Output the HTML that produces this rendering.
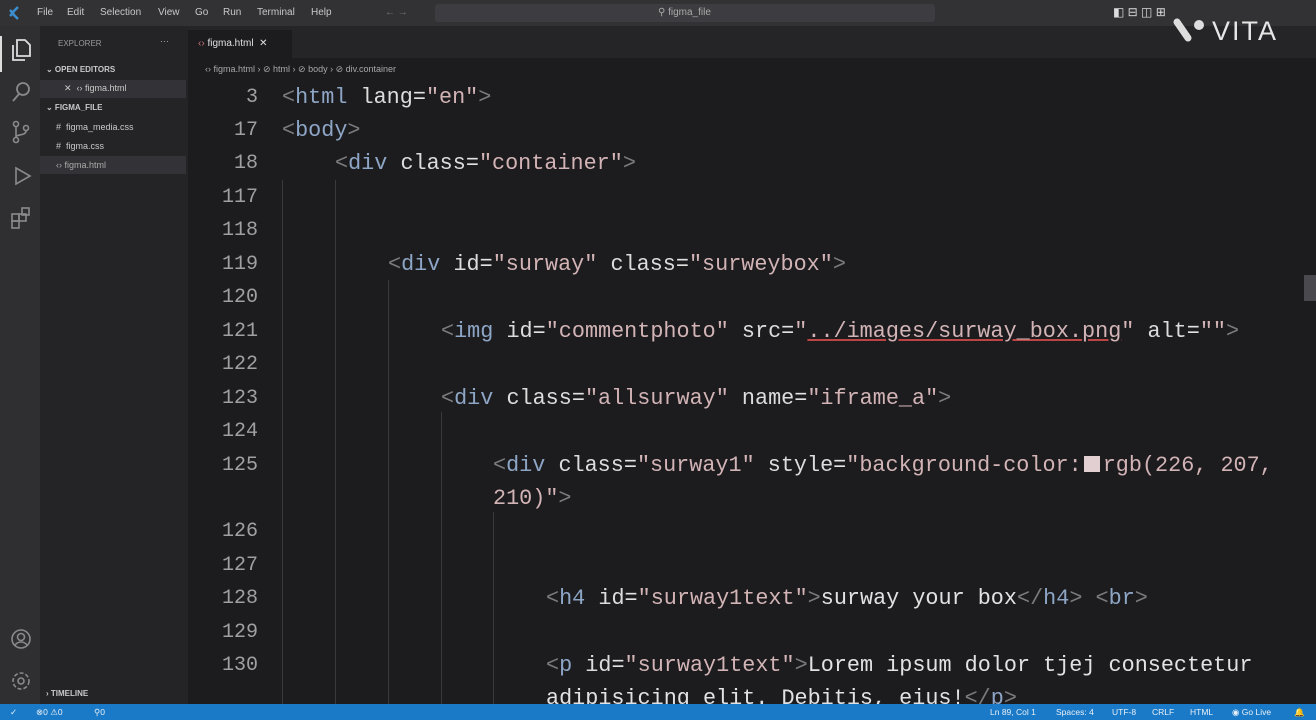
<!DOCTYPE html>
<html><head><meta charset="utf-8"><style>
*{margin:0;padding:0;box-sizing:border-box}
body{width:1316px;height:720px;overflow:hidden;background:#1c1b1e;font-family:"Liberation Sans",sans-serif;position:relative;color:#ccc}
.abs{position:absolute}
#title{left:0;top:0;width:1316px;height:26px;background:#323134}
#title span{position:absolute;top:7px;font-size:10px;color:#c8c8c8}
#act{left:0;top:26px;width:40px;height:678px;background:#2f2e31}
#side{left:40px;top:26px;width:148px;height:678px;background:#242326}
.s{position:absolute;font-size:9px;color:#c9c9c9;white-space:nowrap}
#tabs{left:188px;top:26px;width:1128px;height:32px;background:#252427}
#tab{left:188px;top:30px;width:104px;height:28px;background:#1c1b1e}
#status{left:0;top:704px;width:1316px;height:16px;background:#1a7ac7}
#status span{position:absolute;top:3px;font-size:8.5px;color:#e8f0f8}
.code{position:absolute;font-family:"Liberation Mono",monospace;font-size:21.8px;white-space:pre;line-height:26px;margin-top:2px}
.ln{position:absolute;width:60px;left:198px;text-align:right;font-family:"Liberation Mono",monospace;font-size:20px;color:#a0a0a0;margin-top:2px}
.t{color:#8ea6c6}.b{color:#7b7b7e}.a{color:#dcdcdc}.q{color:#d2b4b6}.x{color:#e2e2e2}
.guide{position:absolute;width:1px;background:#3a393c}
</style></head><body>
<div class="abs" id="title">
<svg class="abs" style="left:8px;top:6px" width="14" height="14"><path d="M10 1 L4 7 L10 13 M2 4 L5 7 L2 10" stroke="#3b8ed0" stroke-width="2.5" fill="none"/></svg>
<span style="left:37px">File</span><span style="left:67px">Edit</span><span style="left:100px">Selection</span><span style="left:158px">View</span><span style="left:195px">Go</span><span style="left:223px">Run</span><span style="left:257px">Terminal</span><span style="left:311px">Help</span>
<span style="left:385px;color:#777">←  →</span>
<div class="abs" style="left:435px;top:4px;width:500px;height:18px;background:#3d3c40;border-radius:3px"></div>
<span style="left:658px;color:#aaa">⚲ figma_file</span>
<span style="left:1113px;color:#ddd;font-size:12px;top:5px">◧ ⊟ ◫ ⊞</span>
</div>
<div class="abs" id="act">
<div class="abs" style="left:0;top:10px;width:2px;height:36px;background:#ddd"></div>
<svg class="abs" style="left:10px;top:12px" width="22" height="24" fill="none" stroke="#ddd" stroke-width="1.8"><path d="M7 2h8l5 5v11H7z M3 7v15h12"/></svg>
<svg class="abs" style="left:10px;top:54px" width="22" height="24" fill="none" stroke="#8a8a8a" stroke-width="1.8"><circle cx="13" cy="9" r="6"/><path d="M9 14l-6 7"/></svg>
<svg class="abs" style="left:10px;top:94px" width="22" height="24" fill="none" stroke="#8a8a8a" stroke-width="1.6"><circle cx="6" cy="4" r="2.5"/><circle cx="6" cy="20" r="2.5"/><circle cx="16" cy="8" r="2.5"/><path d="M6 7v10 M16 11c0 5-10 3-10 6"/></svg>
<svg class="abs" style="left:10px;top:138px" width="22" height="24" fill="none" stroke="#8a8a8a" stroke-width="1.6"><path d="M6 4l14 8-14 8z"/></svg>
<svg class="abs" style="left:10px;top:180px" width="22" height="24" fill="none" stroke="#8a8a8a" stroke-width="1.6"><rect x="2" y="8" width="7" height="7"/><rect x="9" y="8" width="7" height="7"/><rect x="2" y="15" width="7" height="7"/><rect x="12" y="2" width="7" height="7"/></svg>
<svg class="abs" style="left:10px;top:602px" width="22" height="22" fill="none" stroke="#8a8a8a" stroke-width="1.6"><circle cx="11" cy="11" r="9"/><circle cx="11" cy="9" r="3.5"/><path d="M5 17c3-4 9-4 12 0"/></svg>
<svg class="abs" style="left:10px;top:644px" width="22" height="22" fill="none" stroke="#8a8a8a" stroke-width="1.6"><circle cx="11" cy="11" r="3"/><circle cx="11" cy="11" r="8" stroke-dasharray="4 2"/></svg>
</div>
<div class="abs" id="side">
<div class="s" style="left:18px;top:13px;color:#999;font-size:8px">EXPLORER</div>
<div class="s" style="left:120px;top:10px;color:#aaa">···</div>
<div class="s" style="left:6px;top:39px;font-weight:bold;font-size:8px">⌄ OPEN EDITORS</div>
<div class="abs" style="left:0;top:54px;width:146px;height:18px;background:#333236"></div>
<div class="s" style="left:24px;top:57px">✕ &nbsp;‹› figma.html</div>
<div class="s" style="left:6px;top:77px;font-weight:bold;font-size:8px">⌄ FIGMA_FILE</div>
<div class="s" style="left:16px;top:96px"># &nbsp;figma_media.css</div>
<div class="s" style="left:16px;top:115px"># &nbsp;figma.css</div>
<div class="abs" style="left:0;top:130px;width:146px;height:18px;background:#333236"></div>
<div class="s" style="left:16px;top:134px;color:#aaa">‹› figma.html</div>
<div class="s" style="left:6px;top:663px;font-weight:bold;font-size:8px">› TIMELINE</div>
</div>
<div class="abs" id="tabs"></div>
<div class="abs" id="tab"><div class="s" style="left:10px;top:8px;font-size:10px;color:#e0e0e0"><span style="color:#c77">‹›</span> figma.html &nbsp;✕</div></div>
<div class="s" style="left:205px;top:64px;color:#a8a8a8">‹› figma.html › ⊘ html › ⊘ body › ⊘ div.container</div>
<svg class="abs" style="left:1172px;top:18px" width="34" height="26"><path d="M5 4 L16 20" stroke="#ddd" stroke-width="7" stroke-linecap="round"/><circle cx="27" cy="7" r="5" fill="#ddd"/></svg>
<div class="abs" style="left:1212px;top:16px;font-size:27px;color:#e6e6e6;letter-spacing:2px">VITA</div>

<div class="guide" style="left:282px;top:180px;height:524px"></div>
<div class="guide" style="left:335px;top:180px;height:524px"></div>
<div class="guide" style="left:388px;top:280px;height:424px"></div>
<div class="guide" style="left:441px;top:412px;height:292px"></div>
<div class="guide" style="left:493px;top:512px;height:192px"></div>
<div class="abs" style="left:1304px;top:275px;width:12px;height:26px;background:#4a494d"></div>

<div class="ln" style="top:84px">3</div><div class="code" style="left:282px;top:83px"><span class="b">&lt;</span><span class="t">html</span> <span class="a">lang</span><span class="x">=</span><span class="q">"en"</span><span class="b">&gt;</span></div>
<div class="ln" style="top:117px">17</div><div class="code" style="left:282px;top:116px"><span class="b">&lt;</span><span class="t">body</span><span class="b">&gt;</span></div>
<div class="ln" style="top:150px">18</div><div class="code" style="left:335px;top:149px"><span class="b">&lt;</span><span class="t">div</span> <span class="a">class</span><span class="x">=</span><span class="q">"container"</span><span class="b">&gt;</span></div>
<div class="ln" style="top:184px">117</div>
<div class="ln" style="top:217px">118</div>
<div class="ln" style="top:251px">119</div><div class="code" style="left:388px;top:250px"><span class="b">&lt;</span><span class="t">div</span> <span class="a">id</span><span class="x">=</span><span class="q">"surway"</span> <span class="a">class</span><span class="x">=</span><span class="q">"surweybox"</span><span class="b">&gt;</span></div>
<div class="ln" style="top:284px">120</div>
<div class="ln" style="top:318px">121</div><div class="code" style="left:441px;top:317px"><span class="b">&lt;</span><span class="t">img</span> <span class="a">id</span><span class="x">=</span><span class="q">"commentphoto"</span> <span class="a">src</span><span class="x">=</span><span class="q">"<u style="text-decoration-color:#b44">../images/surway_box.png</u>"</span> <span class="a">alt</span><span class="x">=</span><span class="q">""</span><span class="b">&gt;</span></div>
<div class="ln" style="top:351px">122</div>
<div class="ln" style="top:385px">123</div><div class="code" style="left:441px;top:384px"><span class="b">&lt;</span><span class="t">div</span> <span class="a">class</span><span class="x">=</span><span class="q">"allsurway"</span> <span class="a">name</span><span class="x">=</span><span class="q">"iframe_a"</span><span class="b">&gt;</span></div>
<div class="ln" style="top:418px">124</div>
<div class="ln" style="top:452px">125</div><div class="code" style="left:493px;top:451px"><span class="b">&lt;</span><span class="t">div</span> <span class="a">class</span><span class="x">=</span><span class="q">"surway1"</span> <span class="a">style</span><span class="x">=</span><span class="q">"background-color:</span><span style="display:inline-block;width:16px;height:16px;background:#e2cfd2;vertical-align:-1px;margin:0 3px 0 2px"></span><span class="q">rgb(226, 207,</span></div>
<div class="code" style="left:493px;top:484px"><span class="q">210)"</span><span class="b">&gt;</span></div>
<div class="ln" style="top:518px">126</div>
<div class="ln" style="top:552px">127</div>
<div class="ln" style="top:585px">128</div><div class="code" style="left:546px;top:584px"><span class="b">&lt;</span><span class="t">h4</span> <span class="a">id</span><span class="x">=</span><span class="q">"surway1text"</span><span class="b">&gt;</span><span class="x">surway your box</span><span class="b">&lt;/</span><span class="t">h4</span><span class="b">&gt;</span> <span class="b">&lt;</span><span class="t">br</span><span class="b">&gt;</span></div>
<div class="ln" style="top:619px">129</div>
<div class="ln" style="top:652px">130</div><div class="code" style="left:546px;top:651px"><span class="b">&lt;</span><span class="t">p</span> <span class="a">id</span><span class="x">=</span><span class="q">"surway1text"</span><span class="b">&gt;</span><span class="x">Lorem ipsum dolor tjej consectetur</span></div>
<div class="code" style="left:546px;top:684px"><span class="x">adipisicing elit. Debitis, eius!</span><span class="b">&lt;/</span><span class="t">p</span><span class="b">&gt;</span></div>

<div class="abs" id="status">
<span style="left:10px">✓</span><span style="left:36px">⊗0 ⚠0</span><span style="left:94px">⚲0</span>
<span style="left:990px">Ln 89, Col 1</span><span style="left:1056px">Spaces: 4</span><span style="left:1112px">UTF-8</span><span style="left:1152px">CRLF</span><span style="left:1190px">HTML</span><span style="left:1232px">◉ Go Live</span><span style="left:1294px">🔔</span>
</div>
</body></html>
